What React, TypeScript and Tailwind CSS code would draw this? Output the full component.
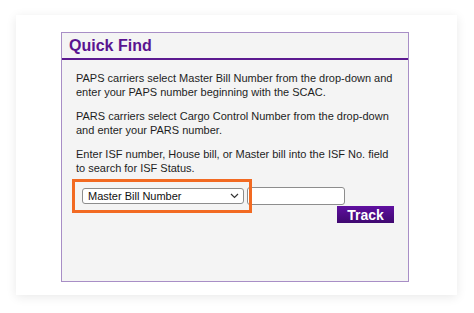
import React from 'react';

const paragraphs = [
	'PAPS carriers select Master Bill Number from the drop-down and enter your PAPS number beginning with the SCAC.',
	'PARS carriers select Cargo Control Number from the drop-down and enter your PARS number.',
	'Enter ISF number, House bill, or Master bill into the ISF No. field to search for ISF Status.',
];

export default function App() {
	return (
		<div
			className="w-[474px] h-[313px] bg-white pt-[15px] pl-[16px]"
			style={{ fontFamily: '"Liberation Sans", Arial, sans-serif' }}
		>
			{/* Card */}
			<div className="w-[441px] h-[280px] bg-white shadow-[0_2px_10px_rgba(0,0,0,0.09)] pt-[17px] pl-[45px]">
				{/* Quick Find panel */}
				<div className="w-[348px] h-[250px] border border-[#a88ec6] bg-[#f4f4f4] flex flex-col">
					<div className="h-[27px] border-b-2 border-[#5c1a90] pl-[7px] flex items-center">
						<h2 className="text-[16px] font-bold text-[#5a1490] leading-none">
							Quick Find
						</h2>
					</div>

					<div className="px-[14px] pt-[11px] text-[11px] leading-[14px] text-[#1e1e1e]">
						{paragraphs.map((text, index) => (
							<p key={index} className="mb-[10px]">
								{text}
							</p>
						))}

						<div className="relative mt-[12px] flex flex-col">
							<div className="flex items-center gap-[3px] pl-[6px]">
								<div className="w-[162px] h-[16px] bg-white border border-[#8d8d8d] rounded-[3px] flex items-center justify-between pl-[5px] pr-[4px]">
									<span className="text-[11px] text-[#111]">Master Bill Number</span>
									<svg width="9" height="6" viewBox="0 0 9 6" fill="none">
										<path
											d="M1 1l3.5 3.5L8 1"
											stroke="#333"
											strokeWidth="1.2"
										/>
									</svg>
								</div>
								<div className="w-[98px] h-[18px] bg-white border border-[#8d8d8d] rounded-[3px]" />
							</div>

							<div className="flex justify-end mt-[1px]">
								<button className="w-[57px] h-[17px] bg-gradient-to-b from-[#6010a0] to-[#3f0870] text-white font-bold text-[14px] leading-none">
									Track
								</button>
							</div>

							{/* Highlight annotation */}
							<div className="absolute left-[-4px] top-[-8px] w-[180px] h-[34px] border-[3px] border-[#f26a22]" />
						</div>
					</div>
				</div>
			</div>
		</div>
	);
}
